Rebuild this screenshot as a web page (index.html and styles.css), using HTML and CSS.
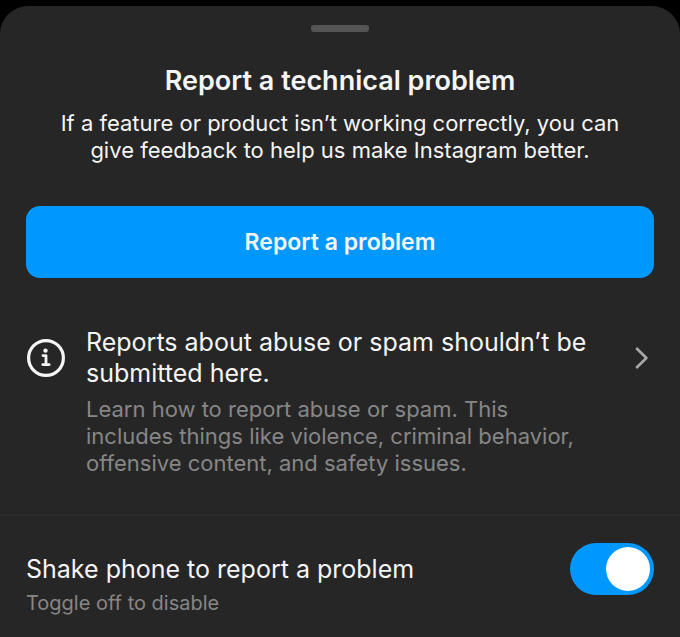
FILE: index.html
```html
<!DOCTYPE html>
<html lang="en">
<head>
    <meta charset="UTF-8">
    <meta name="viewport" content="width=device-width, initial-scale=1.0">
    <title>Report a technical problem</title>
    <link rel="stylesheet" href="styles.css">
</head>
<body>
    <main class="sheet">
        <div class="handle"></div>
        <header class="intro">
            <h1>Report a technical problem</h1>
            <p>If a feature or product isn’t working correctly, you can give feedback to help us make Instagram better.</p>
        </header>
        <button type="button" class="report-button">Report a problem</button>
        <a href="#" class="info-row">
            <svg class="info-icon" viewBox="0 0 40 40" aria-hidden="true">
                <circle cx="20" cy="20" r="17.4" fill="none" stroke="#f5f5f5" stroke-width="3.2"/>
                <circle cx="19.5" cy="12.6" r="2.2" fill="#f5f5f5"/>
                <path d="M17 17.6h3V26.4M16.8 26.6h6.4" fill="none" stroke="#f5f5f5" stroke-width="2.8" stroke-linecap="round" stroke-linejoin="round"/>
            </svg>
            <span class="info-text">
                <span class="info-title">Reports about abuse or spam shouldn’t be submitted here.</span>
                <span class="info-detail">Learn how to report abuse or spam. This includes things like violence, criminal behavior, offensive content, and safety issues.</span>
            </span>
            <svg class="chevron" viewBox="0 0 16 26" aria-hidden="true">
                <path d="M2.2 3l10.2 10L2.2 23" fill="none" stroke="#a8a8a8" stroke-width="2.6" stroke-linecap="butt" stroke-linejoin="round"/>
            </svg>
        </a>
        <div class="shake-row">
            <div class="shake-text">
                <label for="shake">Shake phone to report a problem</label>
                <p id="shake-hint">Toggle off to disable</p>
            </div>
            <input type="checkbox" id="shake" class="toggle" role="switch" aria-describedby="shake-hint" checked>
        </div>
    </main>
</body>
</html>
```
FILE: styles.css
```css
* {
    box-sizing: border-box;
}
body {
    font-family: Inter, sans-serif;
    background-color: #000;
    color: #f5f5f5;
    margin: 0;
    padding-top: 6px;
}
h1, p {
    margin: 0;
}
.sheet {
    display: flex;
    flex-direction: column;
    min-height: calc(100vh - 6px);
    background-color: #262626;
    border-radius: 28px 28px 0 0;
}
.handle {
    width: 58px;
    height: 7px;
    margin: 19px auto 0;
    background-color: #555;
    border-radius: 3px;
}
.intro {
    padding: 33px 48px 0;
    text-align: center;
}
.intro h1 {
    font-size: 27px;
    font-weight: 600;
    line-height: 32px;
}
.intro p {
    margin-top: 13px;
    font-size: 22px;
    line-height: 27px;
}
.report-button {
    height: 72px;
    margin: 42px 26px 0;
    background-color: #0098fd;
    color: #f5f5f5;
    font-family: inherit;
    font-size: 23px;
    font-weight: 600;
    border: none;
    border-radius: 14px;
    cursor: pointer;
}
.info-row {
    display: flex;
    gap: 20px;
    padding: 49px 30px 37px 26px;
    color: inherit;
    text-decoration: none;
    border-bottom: 2px solid #2c2c2c;
}
.info-icon {
    flex: none;
    width: 40px;
    height: 40px;
    margin-top: 11px;
}
.info-text {
    flex: 1;
}
.info-title, .info-detail {
    display: block;
}
.info-title {
    font-size: 25px;
    line-height: 31px;
}
.info-detail {
    max-width: 500px;
    margin-top: 7px;
    color: #868686;
    font-size: 22px;
    line-height: 27px;
}
.chevron {
    flex: none;
    width: 16px;
    height: 26px;
    margin-top: 18px;
}
.shake-row {
    display: flex;
    justify-content: space-between;
    align-items: flex-start;
    padding: 27px 26px 20px;
}
.shake-text {
    padding-top: 10px;
}
.shake-text label {
    display: block;
    font-size: 25px;
    line-height: 32px;
}
.shake-text p {
    margin-top: 6px;
    color: #868686;
    font-size: 20px;
    line-height: 24px;
}
.toggle {
    appearance: none;
    flex: none;
    display: flex;
    width: 84px;
    height: 52px;
    margin: 0;
    padding: 4px;
    background-color: #555;
    border-radius: 26px;
    cursor: pointer;
}
.toggle::before {
    content: "";
    width: 44px;
    height: 44px;
    background-color: #fff;
    border-radius: 50%;
}
.toggle:checked {
    justify-content: flex-end;
    background-color: #0098fd;
}
```
